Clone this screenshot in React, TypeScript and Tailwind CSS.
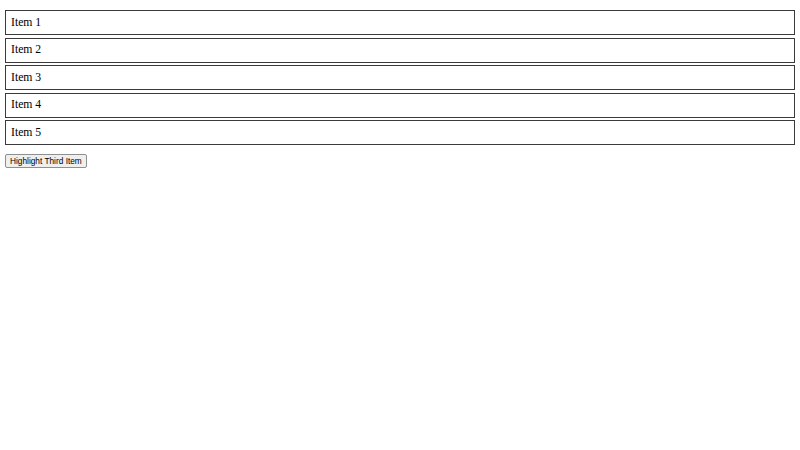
import { useState } from 'react'

const items = ['Item 1', 'Item 2', 'Item 3', 'Item 4', 'Item 5']

export default function App() {
  const [highlighted, setHighlighted] = useState<number | null>(null)

  return (
    <div className="min-h-screen bg-white p-[5px] font-['Liberation_Serif',serif] text-black">
      <ul className="mt-[5px] flex flex-col gap-[2.5px]">
        {items.map((item, i) => (
          <li
            key={item}
            className={`border border-[#3a3a3a] px-[5px] py-[5.75px] text-[11.7px] leading-[11.5px] ${
              highlighted === i ? 'bg-yellow-200' : 'bg-white'
            }`}
          >
            {item}
          </li>
        ))}
      </ul>
      <div className="mt-[9px] flex">
        <button
          onClick={() => setHighlighted(2)}
          className="h-[14px] rounded-[2px] border border-[#8f8f8f] bg-[#efefef] px-[4px] font-['Liberation_Sans',Arial,sans-serif] text-[8.3px] leading-[12px] text-black"
        >
          Highlight Third Item
        </button>
      </div>
    </div>
  )
}
